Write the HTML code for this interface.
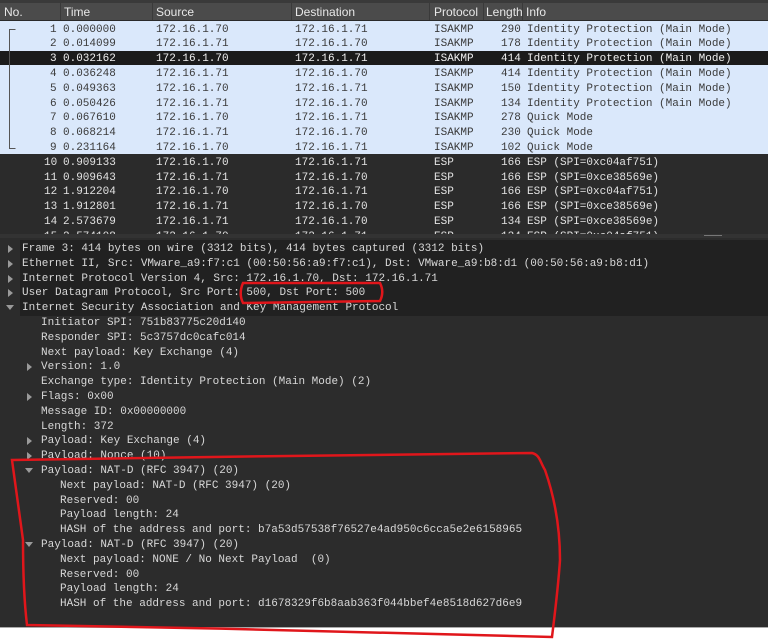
<!DOCTYPE html>
<html><head><meta charset="utf-8"><style>
*{margin:0;padding:0;box-sizing:border-box}
body{width:768px;height:641px;background:#fff;position:relative;overflow:hidden;font-family:"Liberation Mono",monospace;font-size:11px}
#hdr{position:absolute;left:0;top:0;width:768px;height:21px;background:#4b4b4b;border-top:3px solid #3a3a3a;border-bottom:1px solid #2a2a2a;font-family:"Liberation Sans",sans-serif;font-size:12px;color:#e8e8e8}
#hdr span{position:absolute;top:2px}
#hdr i{position:absolute;top:0;width:1px;height:17px;background:#3a3a3a}
#list{position:absolute;left:0;top:21px;width:768px;height:213px;background:#2b2b2b;overflow:hidden}
.r{position:absolute;left:0;width:768px;height:14.8px;line-height:14.8px;white-space:pre}
.r span{position:absolute;top:1.5px}
.lt{background:#dae8fb;color:#3a3a3a}
.dk{color:#e2e2e2}
.sel{background:#1b1b1b;color:#f0f0f0}
#sep{position:absolute;left:0;top:234px;width:768px;height:4px;background:#333}
#det{position:absolute;left:0;top:238px;width:768px;height:389px;background:#2c2c2c;color:#d8d8d8}
.d{position:absolute;height:14.8px;line-height:14.8px;white-space:pre;margin-top:2px}
.tri{position:absolute;width:0;height:0;margin-top:2px}
.rt{border-left:5px solid #9a9a9a;border-top:4px solid transparent;border-bottom:4px solid transparent}
.dn{border-top:5px solid #9a9a9a;border-left:4px solid transparent;border-right:4px solid transparent}
</style></head><body>
<div id="hdr">
<span style="left:4px">No.</span><i style="left:60px"></i>
<span style="left:64px">Time</span><i style="left:152px"></i>
<span style="left:156px">Source</span><i style="left:291px"></i>
<span style="left:295px">Destination</span><i style="left:429px"></i>
<span style="left:434px">Protocol</span><i style="left:483px"></i>
<span style="left:486px">Length</span><i style="left:522px"></i>
<span style="left:526px">Info</span>
</div>
<div id="list">
<div class="r lt" style="top:0"><span style="left:50px">1</span><span style="left:63px">0.000000</span><span style="left:156px">172.16.1.70</span><span style="left:295px">172.16.1.71</span><span style="left:434px">ISAKMP</span><span style="left:501px">290</span><span style="left:527px">Identity Protection (Main Mode)</span></div>
<div class="r lt" style="top:14.8px"><span style="left:50px">2</span><span style="left:63px">0.014099</span><span style="left:156px">172.16.1.71</span><span style="left:295px">172.16.1.70</span><span style="left:434px">ISAKMP</span><span style="left:501px">178</span><span style="left:527px">Identity Protection (Main Mode)</span></div>
<div class="r sel" style="top:29.6px"><span style="left:50px">3</span><span style="left:63px">0.032162</span><span style="left:156px">172.16.1.70</span><span style="left:295px">172.16.1.71</span><span style="left:434px">ISAKMP</span><span style="left:501px">414</span><span style="left:527px">Identity Protection (Main Mode)</span></div>
<div class="r lt" style="top:44.4px"><span style="left:50px">4</span><span style="left:63px">0.036248</span><span style="left:156px">172.16.1.71</span><span style="left:295px">172.16.1.70</span><span style="left:434px">ISAKMP</span><span style="left:501px">414</span><span style="left:527px">Identity Protection (Main Mode)</span></div>
<div class="r lt" style="top:59.2px"><span style="left:50px">5</span><span style="left:63px">0.049363</span><span style="left:156px">172.16.1.70</span><span style="left:295px">172.16.1.71</span><span style="left:434px">ISAKMP</span><span style="left:501px">150</span><span style="left:527px">Identity Protection (Main Mode)</span></div>
<div class="r lt" style="top:74px"><span style="left:50px">6</span><span style="left:63px">0.050426</span><span style="left:156px">172.16.1.71</span><span style="left:295px">172.16.1.70</span><span style="left:434px">ISAKMP</span><span style="left:501px">134</span><span style="left:527px">Identity Protection (Main Mode)</span></div>
<div class="r lt" style="top:88.8px"><span style="left:50px">7</span><span style="left:63px">0.067610</span><span style="left:156px">172.16.1.70</span><span style="left:295px">172.16.1.71</span><span style="left:434px">ISAKMP</span><span style="left:501px">278</span><span style="left:527px">Quick Mode</span></div>
<div class="r lt" style="top:103.6px"><span style="left:50px">8</span><span style="left:63px">0.068214</span><span style="left:156px">172.16.1.71</span><span style="left:295px">172.16.1.70</span><span style="left:434px">ISAKMP</span><span style="left:501px">230</span><span style="left:527px">Quick Mode</span></div>
<div class="r lt" style="top:118.4px"><span style="left:50px">9</span><span style="left:63px">0.231164</span><span style="left:156px">172.16.1.70</span><span style="left:295px">172.16.1.71</span><span style="left:434px">ISAKMP</span><span style="left:501px">102</span><span style="left:527px">Quick Mode</span></div>
<div class="r dk" style="top:133.2px"><span style="left:44px">10</span><span style="left:63px">0.909133</span><span style="left:156px">172.16.1.70</span><span style="left:295px">172.16.1.71</span><span style="left:434px">ESP</span><span style="left:501px">166</span><span style="left:527px">ESP (SPI=0xc04af751)</span></div>
<div class="r dk" style="top:148px"><span style="left:44px">11</span><span style="left:63px">0.909643</span><span style="left:156px">172.16.1.71</span><span style="left:295px">172.16.1.70</span><span style="left:434px">ESP</span><span style="left:501px">166</span><span style="left:527px">ESP (SPI=0xce38569e)</span></div>
<div class="r dk" style="top:162.8px"><span style="left:44px">12</span><span style="left:63px">1.912204</span><span style="left:156px">172.16.1.70</span><span style="left:295px">172.16.1.71</span><span style="left:434px">ESP</span><span style="left:501px">166</span><span style="left:527px">ESP (SPI=0xc04af751)</span></div>
<div class="r dk" style="top:177.6px"><span style="left:44px">13</span><span style="left:63px">1.912801</span><span style="left:156px">172.16.1.71</span><span style="left:295px">172.16.1.70</span><span style="left:434px">ESP</span><span style="left:501px">166</span><span style="left:527px">ESP (SPI=0xce38569e)</span></div>
<div class="r dk" style="top:192.4px"><span style="left:44px">14</span><span style="left:63px">2.573679</span><span style="left:156px">172.16.1.71</span><span style="left:295px">172.16.1.70</span><span style="left:434px">ESP</span><span style="left:501px">134</span><span style="left:527px">ESP (SPI=0xce38569e)</span></div>
<div class="r dk" style="top:207.2px"><span style="left:44px">15</span><span style="left:63px">2.574108</span><span style="left:156px">172.16.1.70</span><span style="left:295px">172.16.1.71</span><span style="left:434px">ESP</span><span style="left:501px">134</span><span style="left:527px">ESP (SPI=0xc04af751)</span></div>
<svg style="position:absolute;left:0;top:0" width="30" height="140"><path d="M15.5 8.5H9.5V127.5H15.5" fill="none" stroke="#555" stroke-width="1"/></svg>
</div>
<div id="sep"><div style="position:absolute;left:704px;top:1px;width:18px;height:1px;background:#777"></div></div>
<div id="det">
<div style="position:absolute;left:20px;top:2px;width:748px;height:76px;background:#212121"></div>
<div class="tri rt" style="left:8px;top:5px"></div><div class="d" style="left:22px;top:2px">Frame 3: 414 bytes on wire (3312 bits), 414 bytes captured (3312 bits)</div>
<div class="tri rt" style="left:8px;top:20px"></div><div class="d" style="left:22px;top:16.8px">Ethernet II, Src: VMware_a9:f7:c1 (00:50:56:a9:f7:c1), Dst: VMware_a9:b8:d1 (00:50:56:a9:b8:d1)</div>
<div class="tri rt" style="left:8px;top:35px"></div><div class="d" style="left:22px;top:31.6px">Internet Protocol Version 4, Src: 172.16.1.70, Dst: 172.16.1.71</div>
<div class="tri rt" style="left:8px;top:49px"></div><div class="d" style="left:22px;top:46.4px">User Datagram Protocol, Src Port: 500, Dst Port: 500</div>
<div class="tri dn" style="left:6px;top:65px"></div><div class="d" style="left:22px;top:61.2px">Internet Security Association and Key Management Protocol</div>
<div class="d" style="left:41px;top:76px">Initiator SPI: 751b83775c20d140</div>
<div class="d" style="left:41px;top:90.8px">Responder SPI: 5c3757dc0cafc014</div>
<div class="d" style="left:41px;top:105.6px">Next payload: Key Exchange (4)</div>
<div class="tri rt" style="left:27px;top:123px"></div><div class="d" style="left:41px;top:120.4px">Version: 1.0</div>
<div class="d" style="left:41px;top:135.2px">Exchange type: Identity Protection (Main Mode) (2)</div>
<div class="tri rt" style="left:27px;top:153px"></div><div class="d" style="left:41px;top:150px">Flags: 0x00</div>
<div class="d" style="left:41px;top:164.8px">Message ID: 0x00000000</div>
<div class="d" style="left:41px;top:179.6px">Length: 372</div>
<div class="tri rt" style="left:27px;top:197px"></div><div class="d" style="left:41px;top:194.4px">Payload: Key Exchange (4)</div>
<div class="tri rt" style="left:27px;top:212px"></div><div class="d" style="left:41px;top:209.2px">Payload: Nonce (10)</div>
<div class="tri dn" style="left:25px;top:228px"></div><div class="d" style="left:41px;top:224px">Payload: NAT-D (RFC 3947) (20)</div>
<div class="d" style="left:60px;top:238.8px">Next payload: NAT-D (RFC 3947) (20)</div>
<div class="d" style="left:60px;top:253.6px">Reserved: 00</div>
<div class="d" style="left:60px;top:268.4px">Payload length: 24</div>
<div class="d" style="left:60px;top:283.2px">HASH of the address and port: b7a53d57538f76527e4ad950c6cca5e2e6158965</div>
<div class="tri dn" style="left:25px;top:302px"></div><div class="d" style="left:41px;top:298px">Payload: NAT-D (RFC 3947) (20)</div>
<div class="d" style="left:60px;top:312.8px">Next payload: NONE / No Next Payload  (0)</div>
<div class="d" style="left:60px;top:327.6px">Reserved: 00</div>
<div class="d" style="left:60px;top:342.4px">Payload length: 24</div>
<div class="d" style="left:60px;top:357.2px">HASH of the address and port: d1678329f6b8aab363f044bbef4e8518d627d6e9</div>
</div>
<div style="position:absolute;left:0;top:627px;width:768px;height:1px;background:#aaa"></div>
<svg style="position:absolute;left:0;top:0" width="768" height="641">
<path d="M243 283 C240 290 240 297 243 303 L380 301 C383 295 383 289 380 283 Z" fill="none" stroke="#e0161b" stroke-width="2.5"/>
<path d="M12 460 C150 457 400 455 532 453 C540 455 540 462 545 470 C552 490 560 520 560 560 C558 590 554 620 552 637 C400 632 200 628 27 625 C24 600 23 570 23 540 C20 520 16 490 12 460 Z" fill="none" stroke="#e0161b" stroke-width="2.5"/>
</svg>
</body></html>
